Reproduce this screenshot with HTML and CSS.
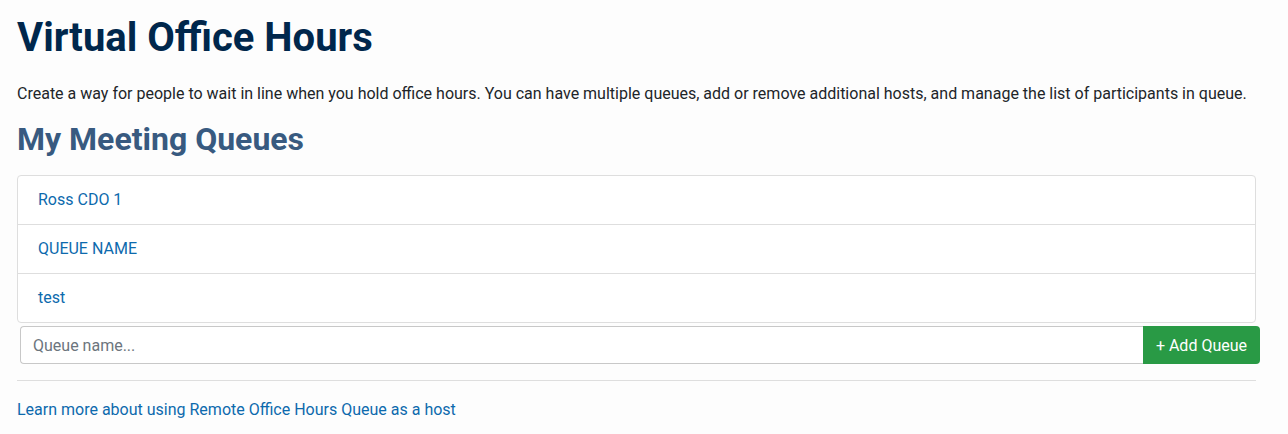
FILE: index.html
```html
<!DOCTYPE html>
<html lang="en">
<head>
<meta charset="utf-8">
<title>Virtual Office Hours</title>
<link rel="stylesheet" href="styles.css">
</head>
<body>
<main class="page">
  <h1 class="title">Virtual Office Hours</h1>
  <p class="intro">Create a way for people to wait in line when you hold office hours. You can have multiple queues, add or remove additional hosts, and manage the list of participants in queue.</p>
  <h2 class="subtitle">My Meeting Queues</h2>
  <ul class="queue-list">
    <li class="queue-item"><a href="#" class="queue-link">Ross CDO 1</a></li>
    <li class="queue-item"><a href="#" class="queue-link">QUEUE NAME</a></li>
    <li class="queue-item"><a href="#" class="queue-link">test</a></li>
  </ul>
  <form class="add-form">
    <input class="add-input" type="text" placeholder="Queue name...">
    <button class="add-btn" type="button">+ Add Queue</button>
  </form>
  <hr class="divider">
  <a href="#" class="learn-link">Learn more about using Remote Office Hours Queue as a host</a>
</main>
</body>
</html>
```
FILE: styles.css
```css
* { box-sizing: border-box; }
html, body { margin: 0; padding: 0; }
body {
  background: #fdfdfd;
  font-family: Roboto, "Noto Sans", sans-serif;
  color: #212529;
  font-size: 16px;
  line-height: 1.5;
}
.page {
  padding: 0 32px 0 17px;
}
.title {
  margin: 0;
  padding-top: 14px;
  font-size: 40px;
  line-height: 48px;
  font-weight: 700;
  color: #00274c;
}
.intro {
  margin: 20px 0 0;
  font-size: 16px;
  line-height: 24px;
}
.subtitle {
  margin: 14px 0 0;
  font-size: 32px;
  line-height: 38px;
  font-weight: 700;
  color: #385a80;
}
.queue-list {
  list-style: none;
  margin: 17px 0 0;
  padding: 0;
  border: 1px solid #dedede;
  border-radius: 4px;
  background: #fff;
}
.queue-item {
  padding: 12px 20px;
  border-top: 1px solid #dedede;
}
.queue-item:first-child { border-top: none; }
.queue-link {
  color: #0d6aad;
  text-decoration: none;
  font-size: 16px;
  line-height: 24px;
}
.add-form {
  display: flex;
  margin: 3px -4px 0 3px;
}
.add-input {
  flex: 1;
  height: 38px;
  border: 1px solid #c8c8c8;
  border-right: none;
  border-radius: 4px 0 0 4px;
  padding: 6px 12px;
  font-family: Roboto, sans-serif;
  font-size: 16px;
  color: #495057;
  background: #fff;
}
.add-input::placeholder { color: #6c757d; }
.add-btn {
  height: 38px;
  border: none;
  border-radius: 0 4px 4px 0;
  background: #299a45;
  color: #fff;
  font-family: Roboto, sans-serif;
  font-size: 16px;
  padding: 0 13px;
}
.divider {
  margin: 16px 0 0;
  border: none;
  border-top: 1px solid #dedede;
}
.learn-link {
  display: inline-block;
  margin-top: 17px;
  color: #0d6aad;
  text-decoration: none;
  line-height: 24px;
}
```
